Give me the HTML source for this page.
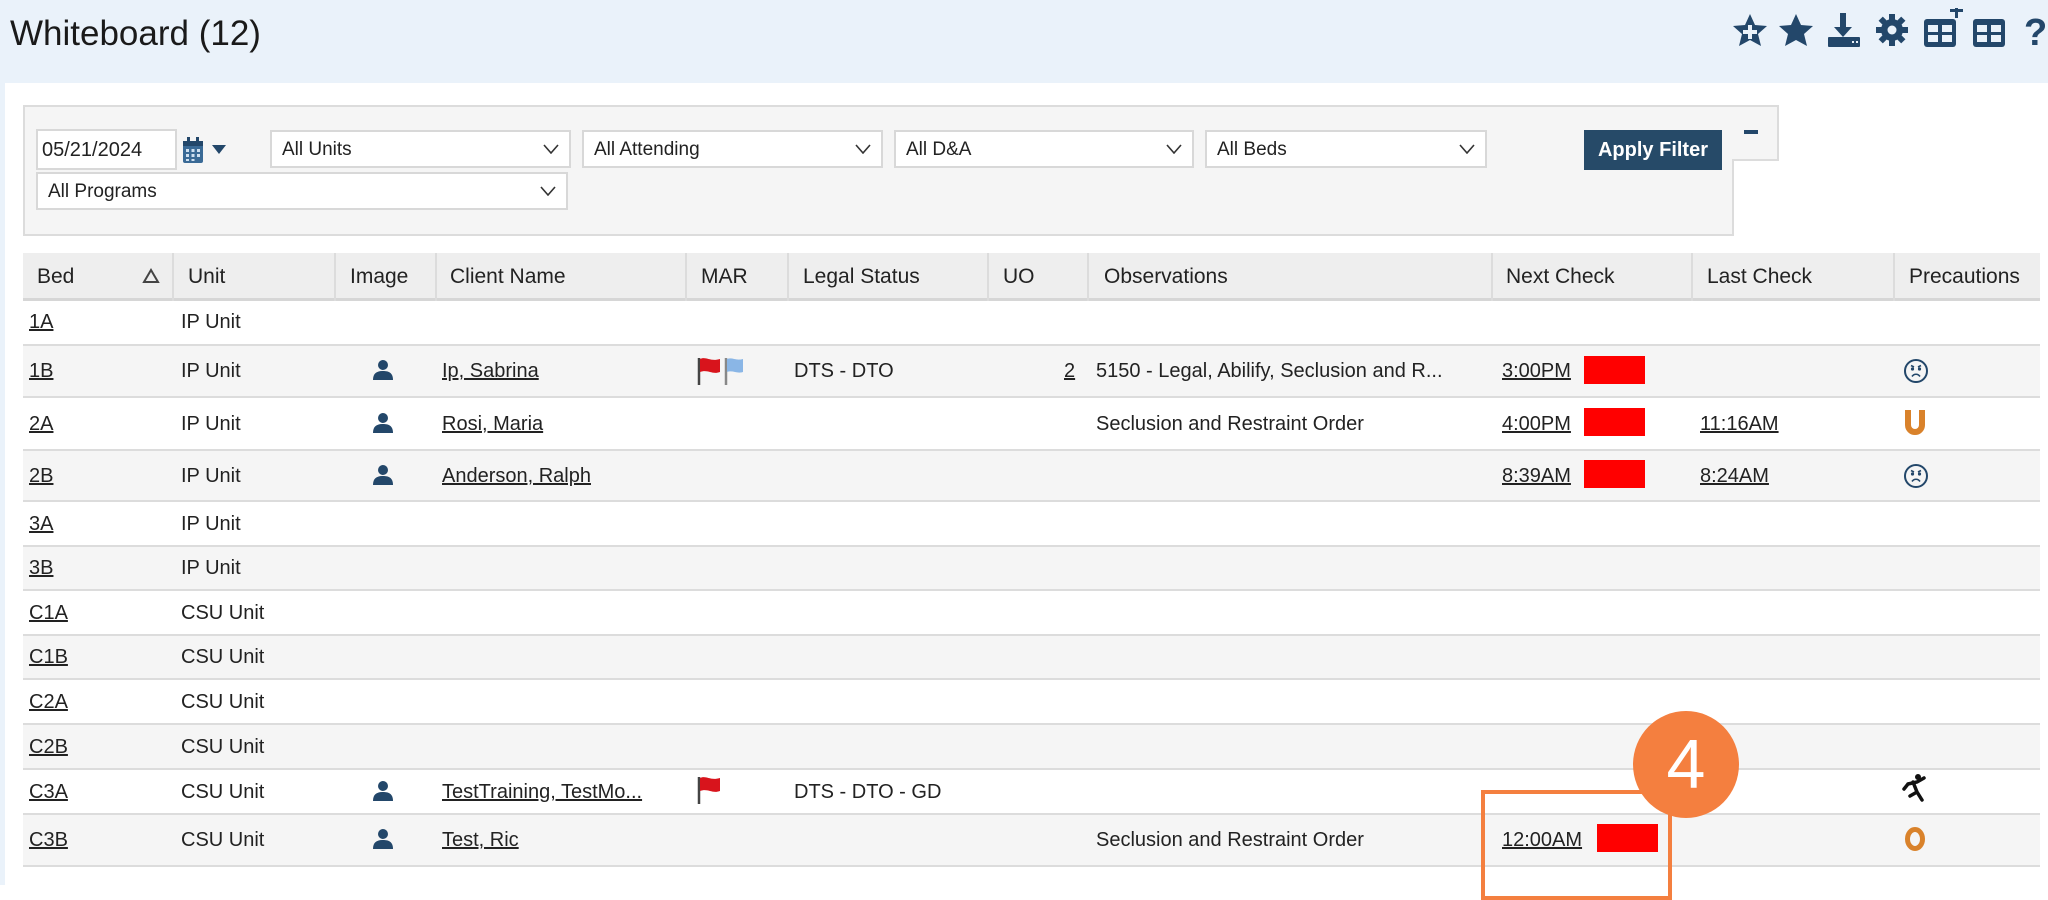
<!DOCTYPE html>
<html><head><meta charset="utf-8"><style>
*{margin:0;padding:0;box-sizing:border-box}
body{width:2048px;height:885px;overflow:hidden;background:#fff;font-family:"Liberation Sans",sans-serif;color:#222;position:relative}
.a{position:absolute;white-space:nowrap}
.hdr{left:0;top:0;width:2048px;height:83px;background:#eaf2fa}
.sel{position:absolute;background:#fff;border:2px solid #d8d8d8;height:38px;font-size:19px;line-height:36px;padding-left:10px;color:#222}
.sel svg{position:absolute;right:10px;top:12px}
.row{position:absolute;left:23px;width:2017px;border-bottom:2px solid #dcdcdc}
.t{position:absolute;font-size:20px;white-space:nowrap;line-height:24px}
.u{text-decoration:underline}
.th{position:absolute;font-size:21px;top:265px;color:#222}
.vs{position:absolute;top:253px;width:2px;height:48px;background:#dcdcdc}
.red{position:absolute;background:#ff0000;width:61px;height:28px}
</style></head><body>
<div class="a hdr"></div>
<div class="a" style="left:0;top:83px;width:5px;height:802px;background:#eaf2fa"></div>
<div class="a" style="left:10px;top:14px;font-size:35px;color:#1a1a1a">Whiteboard (12)</div>

<!-- top icons -->
<svg class="a" style="left:1728px;top:8px" width="320" height="42" viewBox="0 0 320 42">
<g fill="#23476a">
<path d="M22 6 L27 17 L39 18 L30 26 L33 38 L22 32 L11 38 L14 26 L5 18 L17 17Z"/>
<path d="M20 17h4v5h5v4h-5v5h-4v-5h-5v-4h5z" fill="#eaf2fa"/>
<path d="M68 6 L73 17 L85 18 L76 26 L79 38 L68 32 L57 38 L60 26 L51 18 L63 17Z"/>
<path d="M112 5h6v14h6l-9 10-9-10h6z"/>
<rect x="100" y="29" width="32" height="10" rx="1"/>
<rect x="124" y="33" width="2" height="2" fill="#eaf2fa"/><rect x="128" y="33" width="2" height="2" fill="#eaf2fa"/>
<circle cx="164" cy="22" r="11"/>
<g transform="translate(164 22)"><rect x="-3" y="-16" width="6" height="32"/><rect x="-3" y="-16" width="6" height="32" transform="rotate(45)"/><rect x="-3" y="-16" width="6" height="32" transform="rotate(90)"/><rect x="-3" y="-16" width="6" height="32" transform="rotate(135)"/></g>
<circle cx="164" cy="22" r="4.5" fill="#eaf2fa"/>
<rect x="196" y="11" width="32" height="28" rx="3"/>
<g fill="#eaf2fa"><rect x="200" y="17" width="10" height="7"/><rect x="214" y="17" width="10" height="7"/><rect x="200" y="27" width="10" height="7"/><rect x="214" y="27" width="10" height="7"/></g>
<rect x="227" y="-4" width="3" height="14"/><rect x="222" y="1" width="13" height="3"/>
<rect x="245" y="11" width="32" height="28" rx="3"/>
<g fill="#eaf2fa"><rect x="249" y="17" width="10" height="7"/><rect x="263" y="17" width="10" height="7"/><rect x="249" y="27" width="10" height="7"/><rect x="263" y="27" width="10" height="7"/></g>
</g>
<text x="296" y="37" font-family="Liberation Sans" font-weight="bold" font-size="38" fill="#23476a">?</text>
</svg>

<!-- filter panel -->
<div class="a" style="left:23px;top:105px;width:1711px;height:131px;background:#f5f5f5;border:2px solid #dcdcdc"></div>
<div class="a" style="left:1732px;top:105px;width:47px;height:56px;background:#f5f5f5;border:2px solid #dcdcdc;border-left:none"></div>
<div class="a" style="left:1744px;top:130px;width:14px;height:4px;background:#23476a"></div>
<div class="sel" style="left:36px;top:129px;width:141px;height:41px;padding-left:4px;line-height:38px;font-size:20px">05/21/2024</div>
<svg class="a" style="left:182px;top:137px" width="48" height="28"><rect x="1" y="4" width="20" height="22" rx="2" fill="#3a6a96"/><rect x="1" y="4" width="20" height="5" fill="#23476a"/><rect x="5" y="0" width="3" height="7" fill="#23476a"/><rect x="14" y="0" width="3" height="7" fill="#23476a"/><g fill="#cfe0f0"><rect x="4" y="12" width="3" height="3"/><rect x="9.5" y="12" width="3" height="3"/><rect x="15" y="12" width="3" height="3"/><rect x="4" y="17" width="3" height="3"/><rect x="9.5" y="17" width="3" height="3"/><rect x="15" y="17" width="3" height="3"/><rect x="4" y="22" width="3" height="2"/><rect x="9.5" y="22" width="3" height="2"/></g><path d="M30 8h14l-7 9z" fill="#23476a"/></svg>
<div class="sel" style="left:270px;top:130px;width:301px">All Units<svg width="16" height="10"><path d="M1 1l7 8 7-8" stroke="#333" stroke-width="1.6" fill="none"/></svg></div>
<div class="sel" style="left:582px;top:130px;width:301px">All Attending<svg width="16" height="10"><path d="M1 1l7 8 7-8" stroke="#333" stroke-width="1.6" fill="none"/></svg></div>
<div class="sel" style="left:894px;top:130px;width:300px">All D&amp;A<svg width="16" height="10"><path d="M1 1l7 8 7-8" stroke="#333" stroke-width="1.6" fill="none"/></svg></div>
<div class="sel" style="left:1205px;top:130px;width:282px">All Beds<svg width="16" height="10"><path d="M1 1l7 8 7-8" stroke="#333" stroke-width="1.6" fill="none"/></svg></div>
<div class="sel" style="left:36px;top:172px;width:532px">All Programs<svg width="16" height="10"><path d="M1 1l7 8 7-8" stroke="#333" stroke-width="1.6" fill="none"/></svg></div>
<div class="a" style="left:1584px;top:130px;width:138px;height:40px;background:#264a68;color:#fff;font-size:20px;line-height:40px;text-align:center;font-weight:bold">Apply Filter</div>

<!-- table header -->
<div class="a" style="left:23px;top:253px;width:2017px;height:48px;background:#eeeeee;border-bottom:3px solid #d6d6d6"></div>
<div class="vs" style="left:172px"></div><div class="vs" style="left:334px"></div><div class="vs" style="left:435px"></div><div class="vs" style="left:685px"></div><div class="vs" style="left:787px"></div><div class="vs" style="left:987px"></div><div class="vs" style="left:1087px"></div><div class="vs" style="left:1491px"></div><div class="vs" style="left:1691px"></div><div class="vs" style="left:1893px"></div>
<div class="th" style="left:37px">Bed</div>
<svg class="a" style="left:142px;top:268px" width="18" height="16"><path d="M9 2L16 14H2Z" stroke="#444" stroke-width="2" fill="none"/></svg>
<div class="th" style="left:188px">Unit</div>
<div class="th" style="left:350px">Image</div>
<div class="th" style="left:450px">Client Name</div>
<div class="th" style="left:701px">MAR</div>
<div class="th" style="left:803px">Legal Status</div>
<div class="th" style="left:1003px">UO</div>
<div class="th" style="left:1104px">Observations</div>
<div class="th" style="left:1506px">Next Check</div>
<div class="th" style="left:1707px">Last Check</div>
<div class="th" style="left:1909px">Precautions</div>

<!-- rows -->
<div class="row" style="top:301px;height:45px;background:#fff"></div>
<div class="row" style="top:346px;height:52px;background:#f5f5f5"></div>
<div class="row" style="top:398px;height:53px;background:#fff"></div>
<div class="row" style="top:451px;height:51px;background:#f5f5f5"></div>
<div class="row" style="top:502px;height:45px;background:#fff"></div>
<div class="row" style="top:547px;height:44px;background:#f5f5f5"></div>
<div class="row" style="top:591px;height:45px;background:#fff"></div>
<div class="row" style="top:636px;height:44px;background:#f5f5f5"></div>
<div class="row" style="top:680px;height:45px;background:#fff"></div>
<div class="row" style="top:725px;height:45px;background:#f5f5f5"></div>
<div class="row" style="top:770px;height:45px;background:#fff"></div>
<div class="row" style="top:815px;height:52px;background:#f5f5f5"></div>

<div class="t u" style="left:29px;top:310px">1A</div><div class="t" style="left:181px;top:310px">IP Unit</div>
<div class="t u" style="left:29px;top:359px">1B</div><div class="t" style="left:181px;top:359px">IP Unit</div>
<div class="t u" style="left:29px;top:412px">2A</div><div class="t" style="left:181px;top:412px">IP Unit</div>
<div class="t u" style="left:29px;top:464px">2B</div><div class="t" style="left:181px;top:464px">IP Unit</div>
<div class="t u" style="left:29px;top:512px">3A</div><div class="t" style="left:181px;top:512px">IP Unit</div>
<div class="t u" style="left:29px;top:556px">3B</div><div class="t" style="left:181px;top:556px">IP Unit</div>
<div class="t u" style="left:29px;top:601px">C1A</div><div class="t" style="left:181px;top:601px">CSU Unit</div>
<div class="t u" style="left:29px;top:645px">C1B</div><div class="t" style="left:181px;top:645px">CSU Unit</div>
<div class="t u" style="left:29px;top:690px">C2A</div><div class="t" style="left:181px;top:690px">CSU Unit</div>
<div class="t u" style="left:29px;top:735px">C2B</div><div class="t" style="left:181px;top:735px">CSU Unit</div>
<div class="t u" style="left:29px;top:780px">C3A</div><div class="t" style="left:181px;top:780px">CSU Unit</div>
<div class="t u" style="left:29px;top:828px">C3B</div><div class="t" style="left:181px;top:828px">CSU Unit</div>

<!-- person icons -->
<svg class="a" style="left:372px;top:359px" width="22" height="22"><circle cx="11" cy="6" r="5" fill="#23476a"/><path d="M1 21c0-7 4-9 10-9s10 2 10 9z" fill="#23476a"/></svg>
<svg class="a" style="left:372px;top:412px" width="22" height="22"><circle cx="11" cy="6" r="5" fill="#23476a"/><path d="M1 21c0-7 4-9 10-9s10 2 10 9z" fill="#23476a"/></svg>
<svg class="a" style="left:372px;top:464px" width="22" height="22"><circle cx="11" cy="6" r="5" fill="#23476a"/><path d="M1 21c0-7 4-9 10-9s10 2 10 9z" fill="#23476a"/></svg>
<svg class="a" style="left:372px;top:780px" width="22" height="22"><circle cx="11" cy="6" r="5" fill="#23476a"/><path d="M1 21c0-7 4-9 10-9s10 2 10 9z" fill="#23476a"/></svg>
<svg class="a" style="left:372px;top:828px" width="22" height="22"><circle cx="11" cy="6" r="5" fill="#23476a"/><path d="M1 21c0-7 4-9 10-9s10 2 10 9z" fill="#23476a"/></svg>

<div class="t u" style="left:442px;top:359px">Ip, Sabrina</div>
<div class="t u" style="left:442px;top:412px">Rosi, Maria</div>
<div class="t u" style="left:442px;top:464px">Anderson, Ralph</div>
<div class="t u" style="left:442px;top:780px">TestTraining, TestMo...</div>
<div class="t u" style="left:442px;top:828px">Test, Ric</div>

<!-- flags -->
<svg class="a" style="left:696px;top:356px" width="52" height="30"><path d="M3 2v27" stroke="#444" stroke-width="2.5"/><path d="M4 3c6-3 10 3 20 0v13c-8 3-12-3-20 0z" fill="#d8141c"/><path d="M30 2v27" stroke="#888" stroke-width="2.5"/><path d="M31 3c5-2 9 2 16 0v13c-6 2-10-2-16 0z" fill="#8ab6e6"/></svg>
<svg class="a" style="left:696px;top:775px" width="30" height="30"><path d="M3 2v27" stroke="#444" stroke-width="2.5"/><path d="M4 3c6-3 10 3 20 0v13c-8 3-12-3-20 0z" fill="#d8141c"/></svg>

<div class="t" style="left:794px;top:359px">DTS - DTO</div>
<div class="t" style="left:794px;top:780px">DTS - DTO - GD</div>
<div class="t u" style="left:1064px;top:359px">2</div>
<div class="t" style="left:1096px;top:359px">5150 - Legal, Abilify, Seclusion and R...</div>
<div class="t" style="left:1096px;top:412px">Seclusion and Restraint Order</div>
<div class="t" style="left:1096px;top:828px">Seclusion and Restraint Order</div>

<div class="t u" style="left:1502px;top:359px">3:00PM</div><div class="red" style="left:1584px;top:356px"></div>
<div class="t u" style="left:1502px;top:412px">4:00PM</div><div class="red" style="left:1584px;top:408px"></div>
<div class="t u" style="left:1502px;top:464px">8:39AM</div><div class="red" style="left:1584px;top:460px"></div>
<div class="t u" style="left:1502px;top:828px">12:00AM</div><div class="red" style="left:1597px;top:824px"></div>
<div class="t u" style="left:1700px;top:412px">11:16AM</div>
<div class="t u" style="left:1700px;top:464px">8:24AM</div>

<!-- precautions -->
<svg class="a" style="left:1903px;top:358px" width="26" height="26"><circle cx="13" cy="13" r="11" fill="none" stroke="#23476a" stroke-width="2"/><circle cx="9.5" cy="11" r="1.6" fill="#23476a"/><circle cx="16.5" cy="11" r="1.6" fill="#23476a"/><path d="M8 7.5l3 1.5M18 7.5l-3 1.5M9 18.5c2-3 6-3 8 0" stroke="#23476a" stroke-width="1.6" fill="none"/></svg>
<svg class="a" style="left:1903px;top:463px" width="26" height="26"><circle cx="13" cy="13" r="11" fill="none" stroke="#23476a" stroke-width="2"/><circle cx="9.5" cy="11" r="1.6" fill="#23476a"/><circle cx="16.5" cy="11" r="1.6" fill="#23476a"/><path d="M8 7.5l3 1.5M18 7.5l-3 1.5M9 18.5c2-3 6-3 8 0" stroke="#23476a" stroke-width="1.6" fill="none"/></svg>
<svg class="a" style="left:1902px;top:407px" width="26" height="32"><path d="M6 3v15a7 7 0 0 0 14 0V3" stroke="#d9822b" stroke-width="6" fill="none"/></svg>
<svg class="a" style="left:1903px;top:826px" width="24" height="26"><ellipse cx="12" cy="13" rx="7.5" ry="9.5" stroke="#d9822b" stroke-width="5" fill="none"/></svg>
<svg class="a" style="left:1900px;top:772px" width="30" height="32"><g stroke="#111" stroke-width="3.5" stroke-linecap="round" fill="none"><path d="M13 10l4 10M8 12l9-2 7-4M17 20l-7 4M17 20l5 8M8 12l-4 5"/></g><circle cx="18" cy="5" r="3" fill="#111"/></svg>

<!-- annotation -->
<div class="a" style="left:1481px;top:790px;width:191px;height:110px;border:4px solid #f47f3f"></div>
<div class="a" style="left:1633px;top:711px;width:106px;height:107px;border-radius:50%;background:#f47f3f;color:#fff;font-size:70px;line-height:107px;text-align:center">4</div>
</body></html>
